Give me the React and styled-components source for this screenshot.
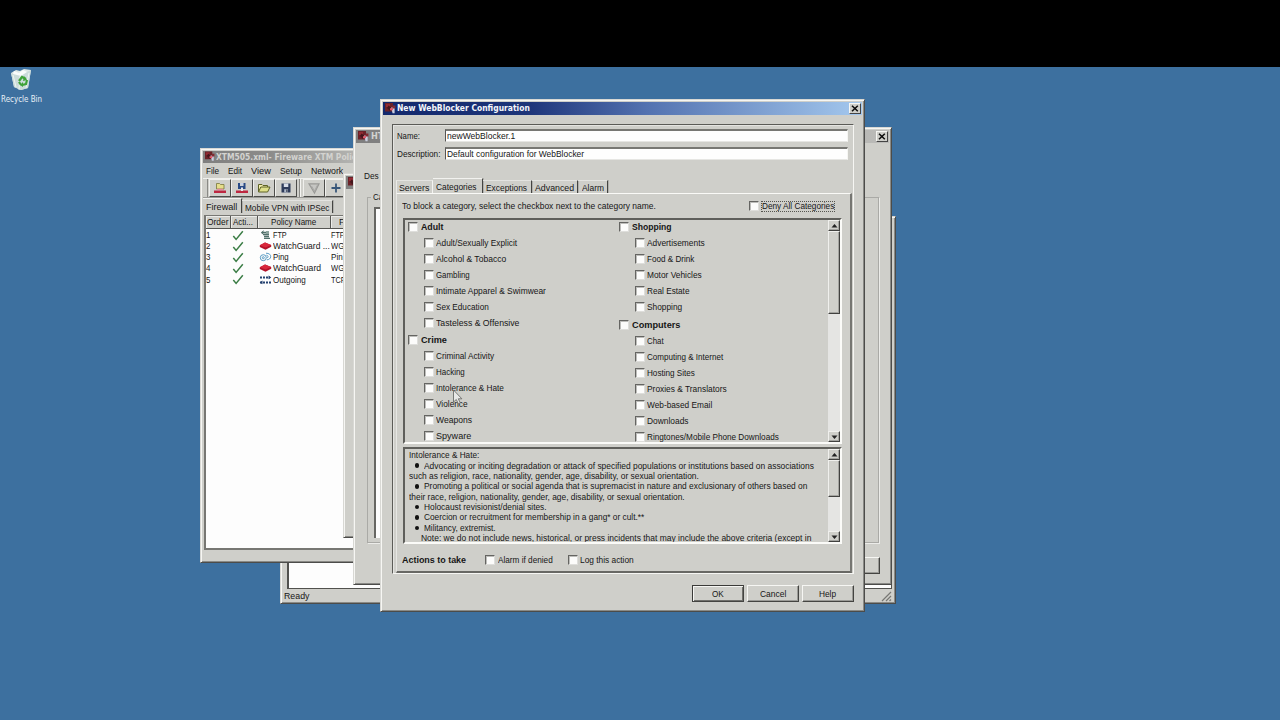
import React, { useLayoutEffect, useRef, useState } from "react";
import styled, { createGlobalStyle, css } from "styled-components";

const FACE = "#cfcfca";
const MID = "#8a8a86";
const LIGHT = "#f6f6f3";

const Global = createGlobalStyle`
  html, body { margin: 0; padding: 0; overflow: hidden; background: #000; }
  * { box-sizing: border-box; }
  body { font-family: "Liberation Sans", Arial, sans-serif; font-size: 8.8px; color: #161616; }
`;

/* ---------- text ---------- */
const TextBox = styled.span`
  display: block;
  flex: none;
  width: ${(p) => p.$w}px;
  height: 12px;
  line-height: 12px;
  white-space: nowrap;
`;
const TextInner = styled.span`
  display: inline-block;
  transform-origin: 0 50%;
  font-family: ${(p) => (p.$ui ? '"DejaVu Sans", sans-serif' : "inherit")};
  font-size: ${(p) => p.$size || 8.8}px;
  font-weight: ${(p) => (p.$bold ? 700 : 400)};
  color: ${(p) => p.$color || "inherit"};
`;
function Text({ w, children, bold, ui, size, color }) {
  const ref = useRef(null);
  const [scale, setScale] = useState(1);
  useLayoutEffect(() => {
    const natural = ref.current.offsetWidth;
    if (natural) setScale(w / natural);
  }, [w, children]);
  return (
    <TextBox $w={w}>
      <TextInner ref={ref} $bold={bold} $ui={ui} $size={size} $color={color} style={{ transform: `scaleX(${scale})` }}>
        {children}
      </TextInner>
    </TextBox>
  );
}

/* ---------- desktop ---------- */
const Screen = styled.main`
  position: relative;
  width: 1280px;
  height: 720px;
  overflow: hidden;
  background: #3d709f;
  border-top: 67px solid #000;
`;
const DesktopIcon = styled.div`
  display: flex;
  flex-direction: column;
  align-items: center;
  width: 42px;
  padding-top: 1px;
  gap: 2px;
`;
const Window = styled.section`
  position: absolute;
  left: ${(p) => p.$x}px;
  top: ${(p) => p.$y - 67}px;
  width: ${(p) => p.$w}px;
  height: ${(p) => p.$h}px;
  display: flex;
  flex-direction: column;
  background: ${FACE};
  border: 1px solid #d8d8d4;
  border-right: 1px solid #4c4c4a;
  border-bottom: 1px solid #4c4c4a;
  box-shadow: inset 1px 1px 0 ${LIGHT}, inset -1px -1px 0 ${MID};
  padding: 2px;
  overflow: hidden;
`;
const TitleBar = styled.header`
  display: flex;
  flex: none;
  align-items: center;
  height: ${(p) => p.$h || 13}px;
  padding: 0 1px 1px 2px;
  gap: ${(p) => p.$gap ?? 1}px;
  background: ${(p) =>
    p.$active ? "linear-gradient(90deg, #13296d 0%, #1d3479 30%, #5372b0 55%, #a4c8ee 100%)" : "linear-gradient(90deg, #7f7f7f, #8c8c8a 40%, #bcbcb9)"};
`;
const CloseBox = styled.button`
  display: flex;
  align-items: center;
  justify-content: center;
  width: 12px;
  height: 11px;
  padding: 0;
  margin-left: auto;
  background: ${FACE};
  border: 1px solid ${LIGHT};
  border-right-color: #444;
  border-bottom-color: #444;
`;
const Close = () => (
  <CloseBox>
    <svg width="8" height="7" viewBox="0 0 8 7">
      <path d="M1 .7 6.8 6.3M6.8 .7 1 6.3" stroke="#0c0c0c" strokeWidth="1.5" />
    </svg>
  </CloseBox>
);
const AppIcon = () => (
  <svg width="11" height="11" viewBox="0 0 11 11">
    <path d="M0 0h8v8.5H0z" fill="#6b2228" />
    <path d="M1 1h4v3H1z" fill="#922b33" />
    <path d="M3.5 2.5 7 5 5 8 2 5z" fill="#45161c" />
    <path d="M6 4.5h3.6v5.8H7.6z" fill="#c9cee0" />
    <path d="M5 5.2h3v2H5z" fill="#e4586a" />
    <path d="M7.6 2.5h2.8v3H7.6z" fill="#812b33" />
  </svg>
);

/* ---------- controls ---------- */
const Check = styled.i`
  flex: none;
  width: 10px;
  height: 10px;
  background: #fcfcfb;
  border: 1px solid #dededb;
  border-top: 1px solid #656562;
  border-left: 1px solid #656562;
  box-shadow: inset 1px 1px 0 #bdbdba;
`;
const FocusRing = styled.span`
  outline: 1px dotted #55554f;
  outline-offset: 0;
  height: 9px;
  display: flex;
  align-items: center;
`;
const Row = styled.div`
  display: flex;
  flex: none;
  align-items: center;
  height: ${(p) => p.$h || 16}px;
  gap: ${(p) => p.$gap || 0}px;
  padding-left: ${(p) => p.$pl || 0}px;
  margin-top: ${(p) => p.$mt || 0}px;
`;
const Spacer = styled.span`
  flex: none;
  width: ${(p) => p.$w}px;
`;
const Field = styled.div`
  display: flex;
  align-items: center;
  width: 403px;
  height: 13px;
  padding-left: 1px;
  background: #fefefe;
  border-top: 2px solid #777773;
  border-left: 1px solid #555;
  border-right: 1px solid ${LIGHT};
  border-bottom: 1px solid #e6e6e3;
`;
const PushButton = styled.button`
  display: flex;
  align-items: center;
  justify-content: center;
  width: 52px;
  height: 17px;
  padding: 0;
  color: #161616;
  font: inherit;
  background: ${FACE};
  border: 1px solid ${(p) => (p.$primary ? "#3b3b39" : LIGHT)};
  border-right-color: #444441;
  border-bottom-color: #444441;
  box-shadow: ${(p) => (p.$primary ? `inset 1px 1px 0 ${LIGHT}, inset -1px -1px 0 #70706c` : `inset -1px -1px 0 #9a9a96`)};
`;

/* ---------- scroll bar ---------- */
const ScrollTrack = styled.div`
  display: flex;
  flex-direction: column;
  flex: none;
  width: 12px;
  margin-left: auto;
  background: #e5e5e3;
`;
const raised = css`
  background: ${FACE};
  border: 1px solid #f0f0ed;
  border-right-color: #41413f;
  border-bottom-color: #41413f;
  box-shadow: inset -1px -1px 0 #a4a4a0;
`;
const ScrollArrow = styled.div`
  ${raised}
  display: flex;
  align-items: center;
  justify-content: center;
  height: 11px;
  margin-top: ${(p) => (p.$end ? "auto" : 0)};
`;
const Thumb = styled.div`
  ${raised}
  height: ${(p) => p.$h}px;
`;
const Scroll = ({ thumb }) => (
  <ScrollTrack>
    <ScrollArrow>
      <svg width="7" height="4" viewBox="0 0 7 4"><path d="M3.5 0 6.5 3.5H.5z" fill="#222" /></svg>
    </ScrollArrow>
    <Thumb $h={thumb} />
    <ScrollArrow $end>
      <svg width="7" height="4" viewBox="0 0 7 4"><path d="M.5 .5h6L3.5 4z" fill="#222" /></svg>
    </ScrollArrow>
  </ScrollTrack>
);

/* ---------- dialog ---------- */
const DialogPanel = styled.div`
  display: flex;
  flex-direction: column;
  flex: none;
  width: 462px;
  height: 450px;
  margin: 9px 0 0 9px;
  padding: 4px 0 0 3px;
  border: 1px solid #5b5b57;
  border-right: 1px solid ${LIGHT};
  border-bottom: 1px solid ${LIGHT};
  box-shadow: inset 1px 1px 0 #e4e4e1;
`;
const FormRow = styled.div`
  display: flex;
  align-items: center;
  height: 13px;
  margin-bottom: 5px;
  padding-left: 1px;
`;
const FormLabel = styled.label`
  width: 48px;
`;
const Tabs = styled.nav`
  display: flex;
  align-items: flex-end;
  height: ${(p) => p.$h}px;
  margin-top: ${(p) => p.$mt}px;
`;
const Tab = styled.div`
  width: ${(p) => p.$w}px;
  height: ${(p) => (p.$on ? 15 : 13)}px;
  padding: ${(p) => (p.$on ? 2 : 1)}px 0 0 ${(p) => p.$pl}px;
  border-top: 1px solid ${(p) => (p.$on ? "#f2f2ef" : "#e4e4e1")};
  border-left: ${(p) => (p.$first ? "1px solid #eaeae7" : "0")};
  border-right: ${(p) => (p.$open ? "1px solid #f4f4f1" : "1px solid #444442")};
  box-shadow: ${(p) => (p.$open ? "none" : "1px 0 0 #b0b0ac")};
`;
const TabPane = styled.div`
  display: flex;
  flex-direction: column;
  flex: 1;
  width: 456px;
  border-top: 1px solid #fafaf7;
  border-left: 1px solid #e6e6e3;
  border-right: 2px solid #767672;
  border-bottom: 2px solid #686864;
  padding-left: 5px;
`;
const Sunken = styled.div`
  display: flex;
  flex: none;
  width: 439px;
  height: ${(p) => p.$h}px;
  margin-top: ${(p) => p.$mt}px;
  margin-left: 1px;
  overflow: hidden;
  border: 2px solid #5f5f5b;
  border-right-color: #fbfbf8;
  border-bottom-color: #fbfbf8;
`;
const Column = styled.div`
  display: flex;
  flex-direction: column;
  flex: none;
  width: ${(p) => p.$w}px;
  padding: ${(p) => p.$pad || "0"};
  margin-top: ${(p) => p.$mt || 0}px;
`;
const DetailLine = styled.div`
  display: flex;
  align-items: center;
  flex: none;
  height: 10.38px;
  padding-left: ${(p) => p.$pl || 0}px;
`;
const Bullet = styled.i`
  width: 4.4px;
  height: 4.4px;
  margin-right: 4.6px;
  border-radius: 50%;
  background: #111;
`;
const ButtonRow = styled.footer`
  display: flex;
  gap: 3px;
  margin: 11px 0 0 308.5px;
`;

const leftGroups = [
  ["Adult", 22, 0, [["Adult/Sexually Explicit", 81], ["Alcohol & Tobacco", 70], ["Gambling", 34], ["Intimate Apparel & Swimwear", 110], ["Sex Education", 53], ["Tasteless & Offensive", 83]]],
  ["Crime", 26, 1.4, [["Criminal Activity", 58], ["Hacking", 29], ["Intolerance & Hate", 68], ["Violence", 32], ["Weapons", 36], ["Spyware", 35]]],
];
const rightGroups = [
  ["Shopping", 40, 0, [["Advertisements", 58], ["Food & Drink", 47], ["Motor Vehicles", 55], ["Real Estate", 42], ["Shopping", 35]]],
  ["Computers", 48, 2.4, [["Chat", 17], ["Computing & Internet", 76], ["Hosting Sites", 48], ["Proxies & Translators", 80], ["Web-based Email", 65], ["Downloads", 42], ["Ringtones/Mobile Phone Downloads", 132]]],
];
const Groups = ({ groups }) =>
  groups.map(([name, w, mt, items]) => (
    <React.Fragment key={name}>
      <Row $gap={3} $mt={mt}><Check /><Text w={w} bold>{name}</Text></Row>
      {items.map(([label, lw]) => (
        <Row key={label} $pl={16} $gap={2}><Check /><Text w={lw}>{label}</Text></Row>
      ))}
    </React.Fragment>
  ));

const details = [
  [0, 70, "Intolerance & Hate:"],
  [1, 390, "Advocating or inciting degradation or attack of specified populations or institutions based on associations"],
  [0, 290, "such as religion, race, nationality, gender, age, disability, or sexual orientation."],
  [1, 383, "Promoting a political or social agenda that is supremacist in nature and exclusionary of others based on"],
  [0, 276, "their race, religion, nationality, gender, age, disability, or sexual orientation."],
  [1, 123, "Holocaust revisionist/denial sites."],
  [1, 220, "Coercion or recruitment for membership in a gang* or cult.**"],
  [1, 72, "Militancy, extremist."],
  [2, 390, "Note: we do not include news, historical, or press incidents that may include the above criteria (except in"],
];

const Dialog = () => (
  <Window $x={380} $y={99} $w={485} $h={513}>
    <TitleBar $active><AppIcon /><Text w={133} bold ui size={8.8} color="#f4f6fb">New WebBlocker Configuration</Text><Close /></TitleBar>
    <DialogPanel>
      <FormRow><FormLabel><Text w={23}>Name:</Text></FormLabel><Field><Text w={68}>newWebBlocker.1</Text></Field></FormRow>
      <FormRow><FormLabel><Text w={43}>Description:</Text></FormLabel><Field><Text w={137}>Default configuration for WebBlocker</Text></Field></FormRow>
      <Tabs $h={15} $mt={13}>
        <Tab $w={37} $pl={2} $first $open><Text w={30}>Servers</Text></Tab>
        <Tab $w={50} $pl={3} $on><Text w={41}>Categories</Text></Tab>
        <Tab $w={49} $pl={3}><Text w={41}>Exceptions</Text></Tab>
        <Tab $w={46} $pl={3}><Text w={39}>Advanced</Text></Tab>
        <Tab $w={30} $pl={4}><Text w={22}>Alarm</Text></Tab>
      </Tabs>
      <TabPane>
        <Row $h={12} $mt={6}>
          <Text w={254}>To block a category, select the checkbox next to the category name.</Text>
          <Spacer $w={93} /><Check /><Spacer $w={3} />
          <FocusRing><Text w={72}>Deny All Categories</Text></FocusRing>
        </Row>
        <Sunken $h={226} $mt={6}>
          <Column $w={211} $pad="0 0 0 3px" $mt={-1}><Groups groups={leftGroups} /></Column>
          <Column $w={210} $pad="0 0 0 3px" $mt={-1}><Groups groups={rightGroups} /></Column>
          <Scroll thumb={83} />
        </Sunken>
        <Sunken $h={97} $mt={3}>
          <Column $w={415} $pad="1px 0 0 4px">
            {details.map(([kind, w, text]) => (
              <DetailLine key={text} $pl={[0, 6, 12][kind]}>
                {kind === 1 && <Bullet />}
                <Text w={w}>{text}</Text>
              </DetailLine>
            ))}
          </Column>
          <Scroll thumb={37} />
        </Sunken>
        <Row $h={12} $mt={10}>
          <Text w={64} bold>Actions to take</Text>
          <Spacer $w={19} /><Check /><Spacer $w={3} /><Text w={55}>Alarm if denied</Text>
          <Spacer $w={15} /><Check /><Spacer $w={2} /><Text w={54}>Log this action</Text>
        </Row>
      </TabPane>
    </DialogPanel>
    <ButtonRow>
      <PushButton $primary><Text w={12}>OK</Text></PushButton>
      <PushButton><Text w={26}>Cancel</Text></PushButton>
      <PushButton><Text w={17}>Help</Text></PushButton>
    </ButtonRow>
  </Window>
);

/* ---------- policy manager ---------- */
const MenuBar = styled.div`
  display: flex;
  flex: none;
  align-items: center;
  height: 15px;
  padding-left: 3px;
  gap: 9px;
`;
const ToolBar = styled.div`
  display: flex;
  flex: none;
  height: 20px;
  padding: 0 0 0 6px;
  border-top: 1px solid #f0f0ed;
  border-bottom: 1px solid #9b9b97;
  box-shadow: inset 4px 0 0 ${FACE}, inset 5px 0 0 #8a8a86;
`;
const ToolButton = styled.div`
  display: flex;
  flex: none;
  align-items: center;
  justify-content: center;
  width: 22px;
  height: 18px;
  border: 1px solid #f0f0ed;
  border-right-color: #4d4d4a;
  border-bottom-color: #4d4d4a;
`;
const ToolDivider = styled.span`
  width: 2px;
  margin: 0 2px;
  border-left: 1px solid #8a8a86;
  border-right: 1px solid #f4f4f1;
`;
const Table = styled.div`
  display: flex;
  flex-direction: column;
  flex: none;
  width: 200px;
  height: 335px;
  margin: 2px 0 0 1px;
  background: #fdfdfd;
  border-left: 2px solid #777773;
  border-top: 1px solid #777773;
  border-bottom: 2px solid #777773;
`;
const HeadRow = styled.div`
  display: flex;
  flex: none;
  height: 13px;
`;
const HeadCell = styled.div`
  display: flex;
  flex: none;
  align-items: center;
  width: ${(p) => p.$w}px;
  padding-left: ${(p) => p.$pl}px;
  background: ${FACE};
  border-right: 1px solid #555552;
  border-bottom: 1px solid #555552;
  box-shadow: inset 1px 1px 0 #ecece9;
`;
const BodyRow = styled.div`
  display: grid;
  flex: none;
  grid-template-columns: 26px 27px 13px 59px 60px;
  align-items: center;
  height: 11.15px;
`;

const tools = {
  open: (
    <svg width="14" height="12" viewBox="0 0 14 12"><path d="M3.5 1.5h3l1 1H11V7H3.5z" fill="#e5dd8a" stroke="#77763b" strokeWidth=".8" /><path d="M1 8.5h12v2.5H1z" fill="#bd2740" /><path d="M4 7.3h6" stroke="#e8a" /></svg>
  ),
  save: (
    <svg width="14" height="12" viewBox="0 0 14 12"><path d="M3 1h2v6H3zM8.5 1h2v6h-2zM4 4h6v3H4z" fill="#284a86" /><path d="M5.5 1h2.6v2.4H5.5z" fill="#c6d2e8" /><path d="M1 8.5h12v2.5H1z" fill="#bd2740" /><path d="M6 5.5h2V9H6z" fill="#e9e9ee" /></svg>
  ),
  folder: (
    <svg width="14" height="12" viewBox="0 0 14 12"><path d="M1.5 10V2.5h3.5l1 1h4.5V5" fill="#f3efae" stroke="#5e6226" /><path d="m1.5 10 2.3-5H13l-2.4 5z" fill="#dfe08b" stroke="#5e6226" /></svg>
  ),
  disk: (
    <svg width="12" height="12" viewBox="0 0 12 12"><path d="M1.5 1.5h9v9h-9z" fill="#2d3b5a" /><path d="M3.8 1.5h4.5V5H3.8z" fill="#d7dde8" /><path d="M4.2 7.2h3.7v3.3H4.2z" fill="#aeb8ca" /><path d="M6.4 7.5h1v2.5h-1z" fill="#1c2334" /></svg>
  ),
  filter: (
    <svg width="14" height="13" viewBox="0 0 14 13"><path d="M2 1.8h10L7.5 11z" fill="#c6c6c3" stroke="#999996" strokeWidth="1.2" /><path d="m4.5 4 3 5L10.5 3" fill="none" stroke="#a8a8a5" /></svg>
  ),
  plus: (
    <svg width="12" height="12" viewBox="0 0 12 12"><path d="M6 1.5v9M1.5 6h9" stroke="#38577a" strokeWidth="1.8" /></svg>
  ),
};
const rowIcons = {
  ftp: (
    <svg width="13" height="10" viewBox="0 0 13 10"><path d="M3 2.5h7M4 4.5h6M5 6.5h5M5 8.3h6" stroke="#51706b" strokeWidth="1.3" /><path d="M4.8 .8 2.2 2.6l2.6 2" fill="none" stroke="#51706b" /><path d="M7 1h3v3H7z" fill="#8ba39d" /></svg>
  ),
  guard: (
    <svg width="13" height="10" viewBox="0 0 13 10"><path d="M.8 4.2 6 1.5l6.2 2.6v1.7L6.5 8.8.8 6z" fill="#b3122a" /><path d="M.8 4.2 6 1.5l6.2 2.6-5.7 2.5z" fill="#d8283c" /></svg>
  ),
  ping: (
    <svg width="13" height="10" viewBox="0 0 13 10"><g fill="none" stroke="#5b9cc4"><circle cx="4.3" cy="5.7" r="3" /><circle cx="4.3" cy="5.7" r="1" /><path d="M7 1.2c3 0 5 1.5 4.7 3.6-.2 1.8-1.8 3-3.8 3M7.4 3.2c1.8.2 2.3 1.7.8 2.8" /></g></svg>
  ),
  out: (
    <svg width="13" height="10" viewBox="0 0 13 10"><path d="M1 2.4h10M1 7.4h11" stroke="#23406f" strokeWidth="2" strokeDasharray="2 1" /><path d="m9.5.6 2.8 1.8-2.8 1.8zM3.5 5.6.7 7.4l2.8 1.8z" fill="#23406f" /></svg>
  ),
};
const Tick = () => (
  <svg width="12" height="11" viewBox="0 0 12 11"><path d="m1.3 6 2.8 3.4L10.8 1.2" fill="none" stroke="#3b7d45" strokeWidth="1.5" /></svg>
);
const policies = [
  ["1", "ftp", "FTP", 14, "FTP", 14],
  ["2", "guard", "WatchGuard ...", 57, "WG", 13],
  ["3", "ping", "Ping", 16, "Pin", 12],
  ["4", "guard", "WatchGuard", 48, "WG", 13],
  ["5", "out", "Outgoing", 33, "TCP", 15],
];

const PolicyManager = () => (
  <Window $x={200} $y={148} $w={175} $h={415}>
    <TitleBar $h={12} $gap={1}><AppIcon /><Text w={155} bold ui size={8.8} color="#d3d3d0">XTM505.xml- Fireware XTM Policy M</Text></TitleBar>
    <MenuBar><Text w={13}>File</Text><Text w={14}>Edit</Text><Text w={20}>View</Text><Text w={22}>Setup</Text><Text w={32}>Network</Text></MenuBar>
    <ToolBar>
      <ToolButton>{tools.open}</ToolButton>
      <ToolButton>{tools.save}</ToolButton>
      <ToolButton>{tools.folder}</ToolButton>
      <ToolButton>{tools.disk}</ToolButton>
      <ToolDivider />
      <ToolButton>{tools.filter}</ToolButton>
      <ToolButton>{tools.plus}</ToolButton>
    </ToolBar>
    <Tabs $h={15} $mt={0}>
      <Tab $w={39} $pl={3} $on><Text w={31}>Firewall</Text></Tab>
      <Tab $w={91} $pl={3}><Text w={84}>Mobile VPN with IPSec</Text></Tab>
    </Tabs>
    <Table>
      <HeadRow>
        <HeadCell $w={25} $pl={1}><Text w={22}>Order</Text></HeadCell>
        <HeadCell $w={27} $pl={2}><Text w={20}>Acti...</Text></HeadCell>
        <HeadCell $w={73} $pl={13}><Text w={45}>Policy Name</Text></HeadCell>
        <HeadCell $w={73} $pl={8}><Text w={5}>F</Text></HeadCell>
      </HeadRow>
      {policies.map(([n, icon, name, w, type, tw]) => (
        <BodyRow key={n}>
          <Text w={4.5}>{n}</Text><Tick />{rowIcons[icon]}
          <Row $h={11} $pl={1}><Text w={w}>{name}</Text></Row>
          <Text w={tw}>{type}</Text>
        </BodyRow>
      ))}
    </Table>
  </Window>
);

/* ---------- background windows ---------- */
const StatusPane = styled.div`
  flex: 1;
  margin: 0 1px 0 4px;
  background: #fdfdfd;
  border-left: 2px solid #51514e;
  border-right: 1px solid #51514e;
  border-bottom: 1px solid #51514e;
`;
const StatusBar = styled.footer`
  display: flex;
  flex: none;
  align-items: center;
  justify-content: space-between;
  height: 12px;
  padding: 1px 0 0 1px;
`;
const ProxyBody = styled.div`
  display: flex;
  flex-direction: column;
  flex: 1;
  padding: 27px 9px 8px 8px;
`;
const GroupBox = styled.fieldset`
  display: flex;
  flex: none;
  width: 512px;
  height: 352px;
  margin: 9px 0 14px 3px;
  padding: 0 0 2px 6px;
  border: 1px solid #aaaaa6;
  box-shadow: 1px 1px 0 #ecece9;
  legend { padding: 0 2px; margin-left: -3px; }
`;
const WhiteList = styled.div`
  width: 440px;
  height: 331px;
  margin-top: 4px;
  background: #fdfdfd;
  border-left: 2px solid #676763;
  border-top: 2px solid #676763;
`;
const RightButtons = styled.div`
  display: flex;
  justify-content: flex-end;
`;
const Cursor = styled.svg`
  position: absolute;
  left: 452px;
  top: 322px;
`;

export default function App() {
  return (
    <>
      <Global />
      <Screen>
        <DesktopIcon>
          <svg width="24" height="23" viewBox="0 0 24 23">
            <path d="m2 5 5-3 4 1 4-2 7 1-3 18-7 2-7-3z" fill="#dfe9e6" />
            <path d="m2 5 9 2 11-5-3 18-7 2-7-3z" fill="#cbdcda" />
            <path d="m5 3 5 2 4-3 4 2-6 4-8-2z" fill="#f9fcfb" />
            <path d="m11 8-1 14M4 7l3 12M20 5l-3 15" stroke="#edf5f3" />
            <path d="m10 13 3-4 4 2m1 1-1 4-4 1m-1 0-2-3" fill="none" stroke="#3fa339" strokeWidth="2.2" />
            <path d="m15 8 3 4-4 1zM14 14v5l-3-2z" fill="#3fa339" />
          </svg>
          <Text w={41} ui size={8} color="#e9f1f7">Recycle Bin</Text>
        </DesktopIcon>

        <Window $x={280} $y={216} $w={616} $h={388}>
          <StatusPane />
          <StatusBar>
            <Text w={25}>Ready</Text>
            <svg width="12" height="12" viewBox="0 0 12 12"><path d="m1 11 9-9M5 11l5-5M8.5 11 10 9.5" stroke="#777773" strokeWidth="1.2" /></svg>
          </StatusBar>
        </Window>

        <PolicyManager />

        <Window $x={343} $y={173} $w={60} $h={365}>
          <TitleBar><AppIcon /></TitleBar>
        </Window>

        <Window $x={353} $y={127} $w={539} $h={458}>
          <TitleBar $gap={2}><AppIcon /><Text w={12} bold ui size={8.8} color="#d3d3d0">HT</Text><Close /></TitleBar>
          <ProxyBody>
            <Text w={15}>Des</Text>
            <GroupBox><legend><Text w={10}>Ca</Text></legend><WhiteList /></GroupBox>
            <RightButtons><PushButton>&nbsp;</PushButton></RightButtons>
          </ProxyBody>
        </Window>

        <Dialog />

        <Cursor width="12" height="17" viewBox="0 0 12 17">
          <path d="M1.5 1v12l2.8-2.5 2 4.3 2-1-2-4h3.6z" fill="#e9e9e7" stroke="#6d6d6b" strokeWidth=".9" />
        </Cursor>
      </Screen>
    </>
  );
}
